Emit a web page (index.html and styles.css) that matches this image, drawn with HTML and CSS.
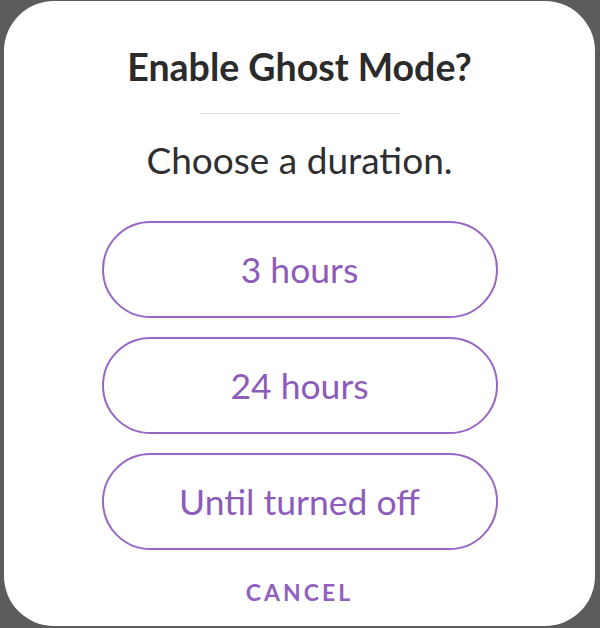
FILE: index.html
```html
<!DOCTYPE html>
<html>
<head>
<meta charset="utf-8">
<link rel="stylesheet" href="styles.css">
</head>
<body>
<div class="screen">
  <div class="dialog">
    <h1 class="title">Enable Ghost Mode?</h1>
    <div class="divider"></div>
    <p class="subtitle">Choose a duration.</p>
    <div class="options">
      <button class="option">3 hours</button>
      <button class="option">24 hours</button>
      <button class="option">Until turned off</button>
    </div>
    <button class="cancel">CANCEL</button>
  </div>
</div>
</body>
</html>
```
FILE: styles.css
```css
html, body {
  margin: 0;
  padding: 0;
}
body {
  width: 600px;
  height: 628px;
  background: #5c5c5c;
  overflow: hidden;
  font-family: Lato, "Open Sans", sans-serif;
}
.screen {
  padding: 1px 5px 0 4px;
}
.dialog {
  box-sizing: border-box;
  width: 591px;
  height: 625px;
  background: #ffffff;
  border-radius: 50px;
  padding-top: 44px;
  display: flex;
  flex-direction: column;
  align-items: center;
}
.title {
  margin: 0;
  font-size: 37.5px;
  line-height: 44px;
  font-weight: 700;
  color: #2b2b2b;
  letter-spacing: 0;
}
.divider {
  width: 199px;
  height: 1px;
  background: #dcdcdc;
  margin-top: 24px;
}
.subtitle {
  margin: 24px 0 0;
  font-size: 37px;
  line-height: 44px;
  font-weight: 400;
  color: #2f2f2f;
  letter-spacing: 0;
}
.options {
  margin-top: 39px;
  display: flex;
  flex-direction: column;
  gap: 19px;
}
.option {
  box-sizing: border-box;
  width: 396px;
  height: 97px;
  border: 2px solid #9668c3;
  border-radius: 49px;
  background: #ffffff;
  color: #8d5bb9;
  font-family: Lato, "Open Sans", sans-serif;
  font-size: 35.5px;
  font-weight: 400;
  letter-spacing: 0;
  padding: 0;
}
.cancel {
  margin-top: 28px;
  border: none;
  background: none;
  padding: 0;
  font-family: Lato, "Open Sans", sans-serif;
  font-size: 23px;
  line-height: 28px;
  font-weight: 700;
  letter-spacing: 3px;
  color: #9061c0;
}
```
